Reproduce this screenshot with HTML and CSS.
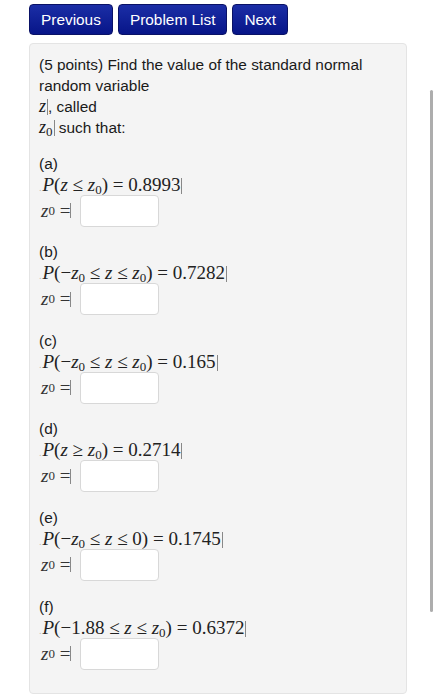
FILE: index.html
```html
<!DOCTYPE html>
<html>
<head>
<meta charset="utf-8">
<link rel="stylesheet" href="styles.css">
</head>
<body>
<div class="page">
  <nav class="nav">
    <button class="btn">Previous</button>
    <button class="btn">Problem List</button>
    <button class="btn">Next</button>
  </nav>
  <div class="panel">
    <p class="intro">(5 points) Find the value of the standard normal random variable<br><span class="m">z</span><span class="cur"></span>, called<br><span class="m">z</span><sub class="s">0</sub><span class="cur"></span> such that:</p>

    <div class="part">
      <div class="label">(a)</div>
      <div class="eq"><span class="dot">.</span><span class="m">P</span>(<span class="m">z</span> ≤ <span class="m">z</span><sub class="s">0</sub>) = 0.8993<span class="cur"></span></div>
      <div class="ans"><span class="m">z</span><sub class="s">0</sub>&nbsp;=<span class="cur"></span><input class="box" type="text"></div>
    </div>

    <div class="part">
      <div class="label">(b)</div>
      <div class="eq"><span class="dot">.</span><span class="m">P</span>(−<span class="m">z</span><sub class="s">0</sub> ≤ <span class="m">z</span> ≤ <span class="m">z</span><sub class="s">0</sub>) = 0.7282<span class="cur"></span></div>
      <div class="ans"><span class="m">z</span><sub class="s">0</sub>&nbsp;=<span class="cur"></span><input class="box" type="text"></div>
    </div>

    <div class="part">
      <div class="label">(c)</div>
      <div class="eq"><span class="dot">.</span><span class="m">P</span>(−<span class="m">z</span><sub class="s">0</sub> ≤ <span class="m">z</span> ≤ <span class="m">z</span><sub class="s">0</sub>) = 0.165<span class="cur"></span></div>
      <div class="ans"><span class="m">z</span><sub class="s">0</sub>&nbsp;=<span class="cur"></span><input class="box" type="text"></div>
    </div>

    <div class="part">
      <div class="label">(d)</div>
      <div class="eq"><span class="dot">.</span><span class="m">P</span>(<span class="m">z</span> ≥ <span class="m">z</span><sub class="s">0</sub>) = 0.2714<span class="cur"></span></div>
      <div class="ans"><span class="m">z</span><sub class="s">0</sub>&nbsp;=<span class="cur"></span><input class="box" type="text"></div>
    </div>

    <div class="part">
      <div class="label">(e)</div>
      <div class="eq"><span class="dot">.</span><span class="m">P</span>(−<span class="m">z</span><sub class="s">0</sub> ≤ <span class="m">z</span> ≤ 0) = 0.1745<span class="cur"></span></div>
      <div class="ans"><span class="m">z</span><sub class="s">0</sub>&nbsp;=<span class="cur"></span><input class="box" type="text"></div>
    </div>

    <div class="part">
      <div class="label">(f)</div>
      <div class="eq"><span class="dot">.</span><span class="m">P</span>(−1.88 ≤ <span class="m">z</span> ≤ <span class="m">z</span><sub class="s">0</sub>) = 0.6372<span class="cur"></span></div>
      <div class="ans"><span class="m">z</span><sub class="s">0</sub>&nbsp;=<span class="cur"></span><input class="box" type="text"></div>
    </div>
  </div>
  <div class="scrollbar"></div>
</div>
</body>
</html>
```

FILE: styles.css
```css
html, body {
  margin: 0;
  padding: 0;
  background: #ffffff;
}
.page {
  position: relative;
  width: 437px;
  height: 700px;
  padding: 4px 0 0 29px;
  box-sizing: border-box;
  font-family: "Liberation Sans", Arial, sans-serif;
  font-size: 15.4px;
  color: #1a1a1a;
}
.nav {
  display: flex;
  gap: 5px;
  height: 31px;
}
.btn {
  font-family: "Liberation Sans", Arial, sans-serif;
  font-size: 15.4px;
  color: #ffffff;
  background: linear-gradient(#1b2ea6, #071588);
  border: 1px solid #0a1266;
  border-radius: 4px;
  padding: 0 11px;
  height: 31px;
  margin: 0;
}
.panel {
  margin-top: 8px;
  width: 378px;
  height: 651px;
  box-sizing: border-box;
  background: #f4f4f4;
  border: 1px solid #e4e4e4;
  border-radius: 4px;
  padding: 10px 9px 0 9px;
}
.intro {
  margin: 0;
  line-height: 21px;
}
.intro .m {
  font-size: 18px;
  line-height: 0;
}
.m {
  font-family: "Liberation Serif", "Times New Roman", serif;
  font-style: italic;
}
.s {
  font-family: "Liberation Serif", "Times New Roman", serif;
  font-size: 13px;
  vertical-align: -3px;
  line-height: 0;
}
.cur {
  display: inline-block;
  width: 1px;
  height: 16px;
  background: #888;
  vertical-align: -3px;
  margin-left: 1px;
}
.part {
  margin-top: 14.6px;
}
.label {
  height: 21px;
  line-height: 21px;
}
.eq {
  height: 21px;
  line-height: 21px;
  font-family: "Liberation Serif", "Times New Roman", serif;
  font-size: 19px;
  color: #222;
  white-space: nowrap;
}
.dot {
  color: #bbb;
  font-size: 10px;
  margin-right: 1px;
}
.ans {
  display: flex;
  align-items: center;
  height: 32px;
  font-family: "Liberation Serif", "Times New Roman", serif;
  font-size: 19px;
  color: #333;
}
.ans .m {
  margin-left: 2px;
}
.ans .cur {
  height: 15px;
  margin-left: 0;
  margin-right: 9px;
}
.box {
  width: 79px;
  height: 32px;
  box-sizing: border-box;
  background: #ffffff;
  border: 1px solid #d8d8d8;
  border-radius: 4px;
  margin: 0;
  padding: 0;
}
.scrollbar {
  position: absolute;
  left: 430px;
  top: 90px;
  width: 3px;
  height: 522px;
  background: #adadad;
  border-radius: 2px;
}
```
